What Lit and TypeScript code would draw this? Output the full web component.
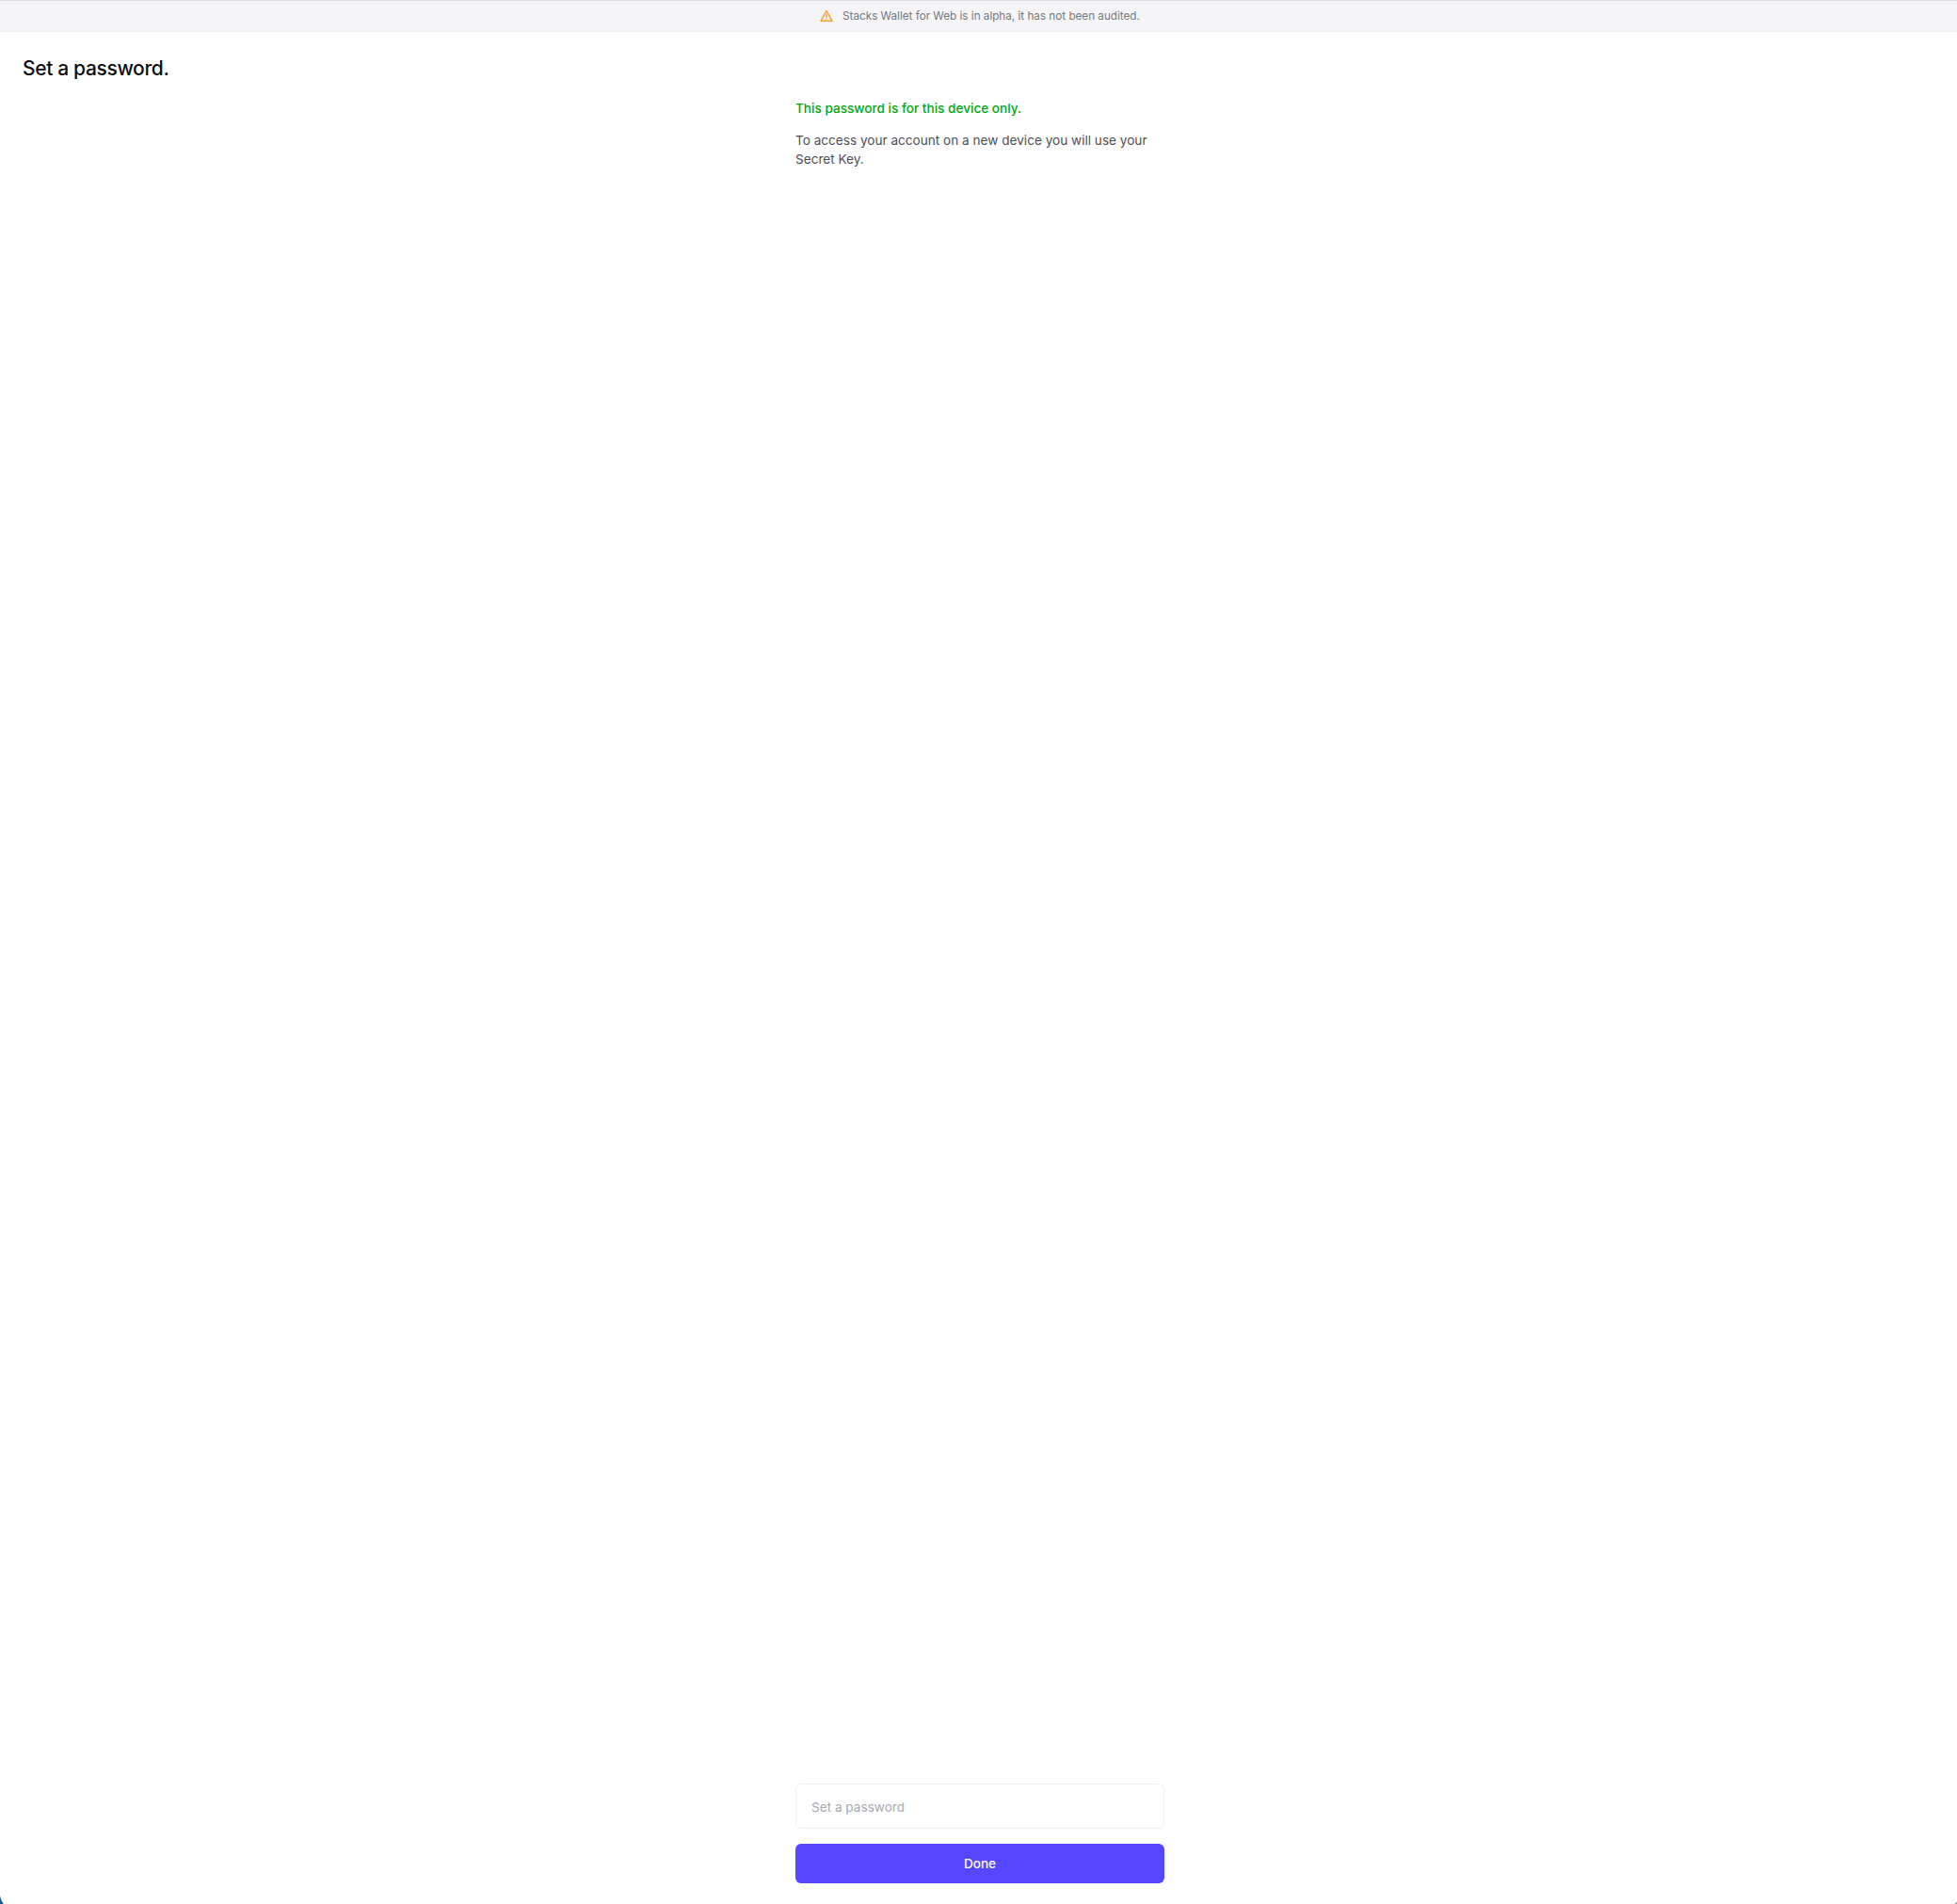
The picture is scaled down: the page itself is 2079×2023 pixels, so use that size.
import { LitElement, html, css } from "lit";
import { customElement } from "lit/decorators.js";

@customElement("app-root")
export class AppRoot extends LitElement {
  static styles = css`
    :host {
      display: flex;
      flex-direction: column;
      height: 2023px;
      overflow: hidden;
      position: relative;
      background: #fff;
      font-family: Inter, "Liberation Sans", sans-serif;
      box-sizing: border-box;
    }
    .banner {
      height: 34px;
      box-sizing: border-box;
      flex: none;
      display: flex;
      align-items: center;
      justify-content: center;
      gap: 10px;
      padding-left: 3px;
      background: #f5f5f7;
      border-top: 1px solid #dcdde2;
      border-bottom: 1px solid #f0f0f2;
      color: #74777d;
      font-size: 11.7px;
      line-height: 16px;
    }
    .banner svg { width: 14px; height: 14px; flex: none; display: block; }
    .head { flex: none; padding: 27px 24px 0; height: 44px; }
    h1 {
      margin: 0;
      font-size: 21px;
      line-height: 24px;
      font-weight: 500;
      letter-spacing: -0.35px;
      color: #0c0c12;
    }
    .main {
      flex: 1;
      display: flex;
      justify-content: center;
      padding-left: 3px;
      min-height: 0;
    }
    .col {
      width: 392px;
      display: flex;
      flex-direction: column;
      padding-bottom: 22px;
      box-sizing: border-box;
    }
    .lead {
      margin: 0 0 14px;
      color: #00a70f;
      font-size: 13.6px;
      line-height: 20px;
      font-weight: 500;
    }
    .body {
      margin: 0;
      color: #4c4e55;
      font-size: 13.6px;
      line-height: 20px;
    }
    .form { margin-top: auto; display: flex; flex-direction: column; gap: 16px; }
    input {
      display: block;
      width: 100%;
      height: 48px;
      box-sizing: border-box;
      border: 1px solid #eff0f2;
      border-radius: 6px;
      padding: 1px 16px 0;
      font: 400 13.6px Inter, "Liberation Sans", sans-serif;
      outline: none;
      background: #fff;
    }
    input::placeholder { color: #a7a9b2; opacity: 1; }
    button {
      height: 42px;
      border: 0;
      border-radius: 6px;
      background: #5546ff;
      color: #fff;
      font: 500 13.6px Inter, "Liberation Sans", sans-serif;
    }
    .corner { position: absolute; bottom: 0; display: block; }
    .corner.left { left: 0; width: 4px; height: 9px; }
    .corner.right { right: 0; width: 3px; height: 3px; }
  `;

  render() {
    return html`
      <div class="banner">
        <svg viewBox="0 0 14 14" fill="none" stroke="#fd9d28" stroke-width="1.4" stroke-linejoin="round" stroke-linecap="round">
          <path d="M7 1.5 L13 12.2 H1 Z" />
          <path d="M7 5.4 V8" />
          <path d="M7 10 V10.2" />
        </svg>
        <span>Stacks Wallet for Web is in alpha, it has not been audited.</span>
      </div>
      <div class="head"><h1>Set a password.</h1></div>
      <div class="main">
        <div class="col">
          <p class="lead">This password is for this device only.</p>
          <p class="body">To access your account on a new device you will use your Secret Key.</p>
          <div class="form">
            <input type="password" placeholder="Set a password" />
            <button type="button">Done</button>
          </div>
        </div>
      </div>
      <svg class="corner left" viewBox="0 0 4 9"><path d="M0 0 Q1 6 4 9 H0 Z" fill="#14598f" /></svg>
      <svg class="corner right" viewBox="0 0 3 3"><path d="M3 0 Q3 2 0 3 H3 Z" fill="#8a8a8a" /></svg>
    `;
  }
}
